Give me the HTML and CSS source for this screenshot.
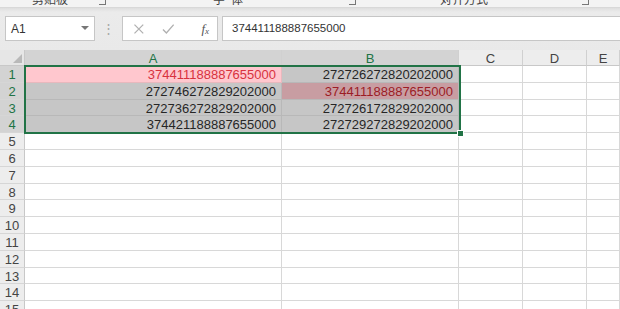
FILE: index.html
```html
<!DOCTYPE html>
<html lang="zh-CN">
<head>
    <meta charset="UTF-8">
    <title>Excel</title>
    <link rel="stylesheet" href="styles.css">
</head>
<body>
    <div class="ribbon">
        <span class="group g1">剪贴板</span>
        <span class="launcher l1"></span>
        <span class="group g2">字体</span>
        <span class="launcher l2"></span>
        <span class="group g3">对齐方式</span>
        <span class="launcher l3"></span>
    </div>
    <div class="formula-bar">
        <div class="name-box">
            <span>A1</span>
            <svg class="caret" width="8" height="5" viewBox="0 0 8 5"><path d="M0 0 L8 0 L4 4 Z" fill="#777"/></svg>
        </div>
        <div class="dots">⋮</div>
        <div class="fx-box">
            <svg width="12" height="12" viewBox="0 0 12 12"><path d="M1.5 1.5 L10.5 10.5 M10.5 1.5 L1.5 10.5" stroke="#b0b0b0" stroke-width="1.3" fill="none"/></svg>
            <svg width="13" height="12" viewBox="0 0 13 12"><path d="M1 6.5 L4.5 10 L12 1.5" stroke="#b0b0b0" stroke-width="1.4" fill="none"/></svg>
            <span class="fx">f<sub>x</sub></span>
        </div>
        <div class="formula-input">374411188887655000</div>
    </div>
    <div class="sheet">
        <div class="corner"><svg width="9" height="9" viewBox="0 0 9 9"><path d="M9 0 L9 9 L0 9 Z" fill="#b9b9b9"/></svg></div>
        <div class="col-head sel">A</div>
        <div class="col-head sel">B</div>
        <div class="col-head">C</div>
        <div class="col-head">D</div>
        <div class="col-head">E</div>

        <div class="row-head sel">1</div>
        <div class="cell num hit">374411188887655000</div>
        <div class="cell num shade">272726272820202000</div>
        <div class="cell"></div><div class="cell"></div><div class="cell"></div>

        <div class="row-head sel">2</div>
        <div class="cell num shade">272746272829202000</div>
        <div class="cell num hit-shade">374411188887655000</div>
        <div class="cell"></div><div class="cell"></div><div class="cell"></div>

        <div class="row-head sel">3</div>
        <div class="cell num shade">272736272829202000</div>
        <div class="cell num shade">272726172829202000</div>
        <div class="cell"></div><div class="cell"></div><div class="cell"></div>

        <div class="row-head sel">4</div>
        <div class="cell num shade">374421188887655000</div>
        <div class="cell num shade">272729272829202000</div>
        <div class="cell"></div><div class="cell"></div><div class="cell"></div>

        <div class="row-head">5</div><div class="cell"></div><div class="cell"></div><div class="cell"></div><div class="cell"></div><div class="cell"></div>
        <div class="row-head">6</div><div class="cell"></div><div class="cell"></div><div class="cell"></div><div class="cell"></div><div class="cell"></div>
        <div class="row-head">7</div><div class="cell"></div><div class="cell"></div><div class="cell"></div><div class="cell"></div><div class="cell"></div>
        <div class="row-head">8</div><div class="cell"></div><div class="cell"></div><div class="cell"></div><div class="cell"></div><div class="cell"></div>
        <div class="row-head">9</div><div class="cell"></div><div class="cell"></div><div class="cell"></div><div class="cell"></div><div class="cell"></div>
        <div class="row-head">10</div><div class="cell"></div><div class="cell"></div><div class="cell"></div><div class="cell"></div><div class="cell"></div>
        <div class="row-head">11</div><div class="cell"></div><div class="cell"></div><div class="cell"></div><div class="cell"></div><div class="cell"></div>
        <div class="row-head">12</div><div class="cell"></div><div class="cell"></div><div class="cell"></div><div class="cell"></div><div class="cell"></div>
        <div class="row-head">13</div><div class="cell"></div><div class="cell"></div><div class="cell"></div><div class="cell"></div><div class="cell"></div>
        <div class="row-head">14</div><div class="cell"></div><div class="cell"></div><div class="cell"></div><div class="cell"></div><div class="cell"></div>
        <div class="row-head">15</div><div class="cell"></div><div class="cell"></div><div class="cell"></div><div class="cell"></div><div class="cell"></div>

        <div class="selection"><span class="handle"></span></div>
    </div>
</body>
</html>
```

FILE: styles.css
```css
* {
    margin: 0;
    padding: 0;
    box-sizing: border-box;
}
body {
    width: 620px;
    height: 309px;
    overflow: hidden;
    background-color: #ffffff;
    font-family: "Liberation Sans", Arial, sans-serif;
    color: #333333;
}
.ribbon {
    height: 8px;
    background-color: #f3f3f3;
    border-bottom: 1px solid #d8d8d8;
    position: relative;
    overflow: hidden;
    font-family: "Noto Sans CJK SC", sans-serif;
    font-size: 12px;
    color: #444444;
}
.group {
    position: absolute;
    top: -9px;
    line-height: 16px;
}
.g1 { left: 32px; }
.g2 { left: 213px; letter-spacing: 6px; }
.g3 { left: 440px; }
.launcher {
    position: absolute;
    top: -2px;
    width: 7px;
    height: 7px;
    border-right: 1px solid #777777;
    border-bottom: 1px solid #777777;
}
.l1 { left: 99px; }
.l2 { left: 349px; }
.l3 { left: 582px; }
.formula-bar {
    height: 42px;
    background: linear-gradient(#dedede, #ebebeb 4px, #e9e9e9);
    display: flex;
    align-items: flex-start;
    padding: 8px 0 0 5px;
}
.name-box {
    width: 90px;
    height: 25px;
    background-color: #ffffff;
    border: 1px solid #c6c6c6;
    display: flex;
    align-items: center;
    justify-content: space-between;
    padding: 0 5px 0 5px;
    font-size: 12px;
    color: #333333;
}
.caret {
    margin-bottom: 1px;
}
.dots {
    width: 27px;
    text-align: center;
    color: #a6a6a6;
    font-size: 13px;
    line-height: 25px;
}
.fx-box {
    width: 96px;
    height: 25px;
    background-color: #ffffff;
    border: 1px solid #c6c6c6;
    display: flex;
    align-items: center;
    padding: 0 8px 0 10px;
    gap: 17px;
}
.fx {
    margin-left: 10px;
    font-family: "Liberation Serif", serif;
    font-style: italic;
    font-size: 13px;
    color: #555555;
}
.fx sub {
    font-size: 9px;
    vertical-align: -1px;
}
.formula-input {
    flex: 1;
    height: 25px;
    margin-left: 4px;
    background-color: #ffffff;
    border: 1px solid #c6c6c6;
    border-right: none;
    font-size: 11.5px;
    line-height: 23px;
    padding-left: 9px;
    color: #333333;
}
.sheet {
    position: relative;
    display: grid;
    grid-template-columns: 25px 257px 177px 64px 64px 1fr;
    grid-template-rows: 16px repeat(15, 16.8px);
}
.corner {
    background-color: #e6e6e6;
    border-right: 1px solid #c8c8c8;
    border-bottom: 1px solid #c8c8c8;
    display: flex;
    align-items: flex-end;
    justify-content: flex-end;
    padding: 0 2px 2px 0;
}
.col-head {
    background-color: #ededed;
    border-right: 1px solid #d0d0d0;
    border-bottom: 1px solid #c8c8c8;
    text-align: center;
    font-size: 13px;
    line-height: 17px;
    color: #444444;
}
.row-head {
    background-color: #ededed;
    border-right: 1px solid #c8c8c8;
    border-bottom: 1px solid #d6d6d6;
    text-align: center;
    font-size: 13px;
    line-height: 18px;
    color: #444444;
}
.col-head.sel,
.row-head.sel {
    background-color: #d3d3d3;
    color: #217346;
}
.cell {
    border-right: 1px solid #d8d8d8;
    border-bottom: 1px solid #d8d8d8;
    font-size: 13px;
    line-height: 18px;
}
.num {
    text-align: right;
    padding-right: 5px;
}
.shade {
    background-color: #c6c6c6;
    border-color: #b8b8b8;
    color: #262626;
}
.hit {
    background-color: #ffc7ce;
    border-color: #e8b8bd;
    color: #d8323e;
}
.hit-shade {
    background-color: #c89da2;
    border-color: #b8b8b8;
    color: #9c1c25;
}
.selection {
    position: absolute;
    left: 24px;
    top: 15px;
    width: 437px;
    height: 69px;
    border: 2px solid #217346;
    pointer-events: none;
}
.handle {
    position: absolute;
    right: -5px;
    bottom: -5px;
    width: 7px;
    height: 7px;
    background-color: #217346;
    border: 1px solid #ffffff;
}
```
